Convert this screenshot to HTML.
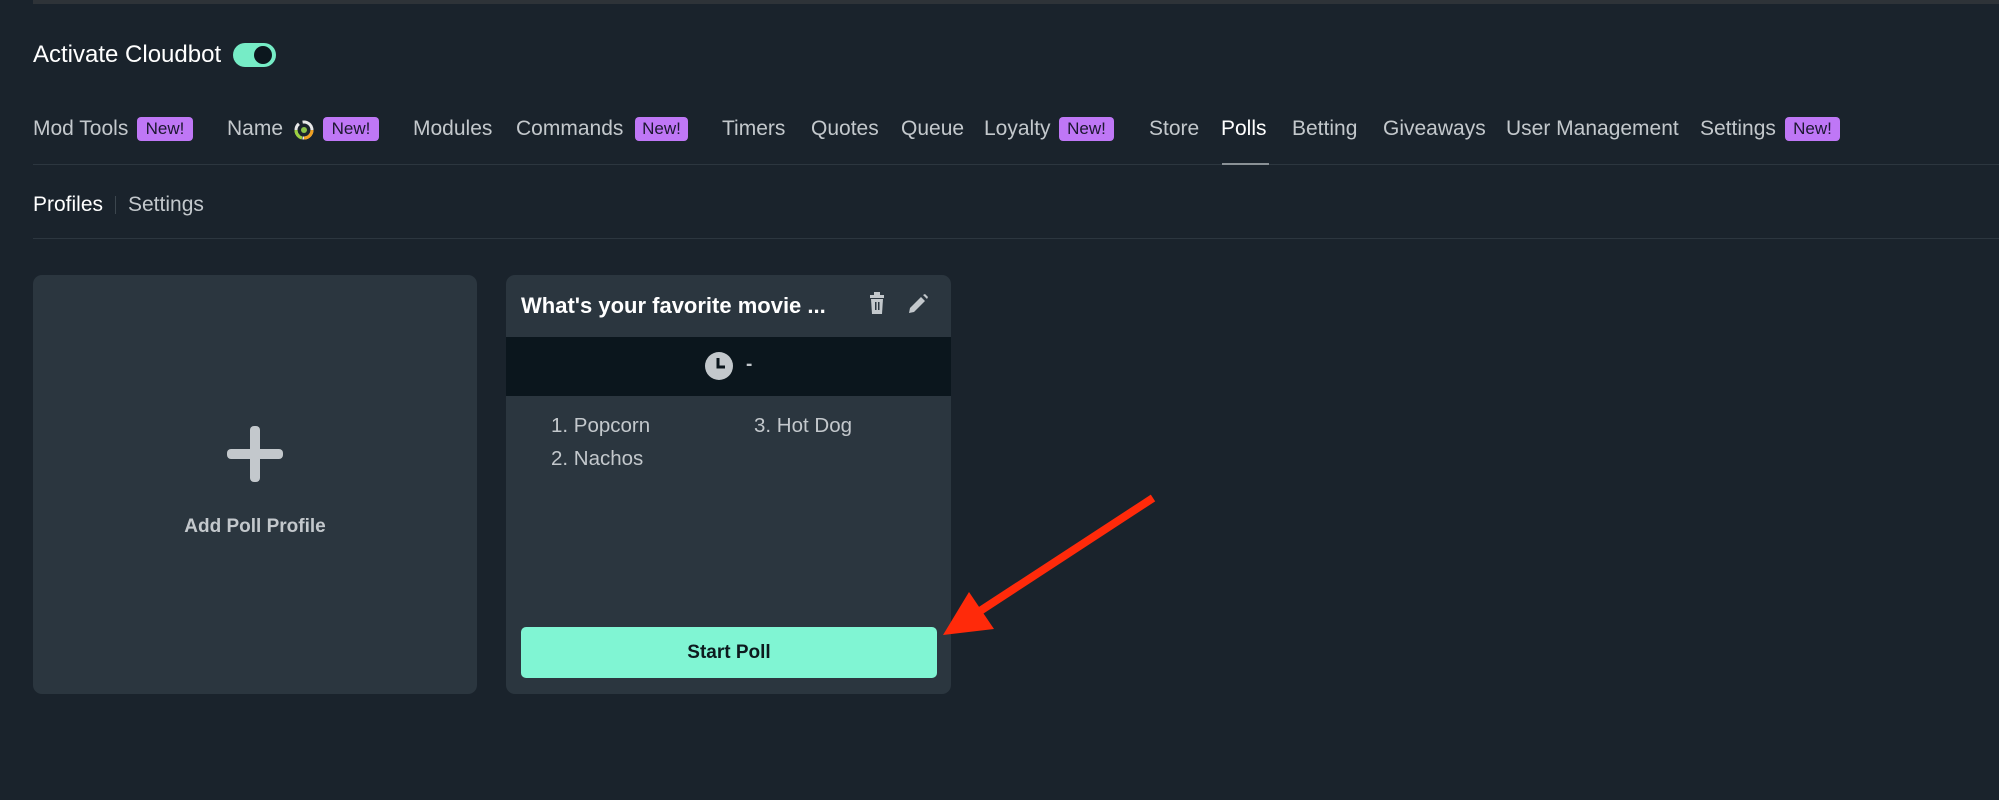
<!DOCTYPE html>
<html><head><meta charset="utf-8"><style>
*{margin:0;padding:0;box-sizing:border-box}
body{width:1999px;height:800px;background:#1a232c;font-family:"Liberation Sans",sans-serif;color:#c3c8cc;position:relative;overflow:hidden}
.a{position:absolute;white-space:nowrap}
.topbar{left:33px;top:0;width:1966px;height:4px;background:#2e3338}
.nav{top:116px;font-size:21px;color:#c3c8cc;line-height:26px}
.badge{position:absolute;top:117px;height:24px;background:#bf77f6;color:#1c1830;font-size:17px;line-height:24px;border-radius:4px;text-align:center}
.line{height:1px;background:#2c363f;left:33px;width:1966px}
.card{background:#2b363f;border-radius:9px}
</style></head><body>
<div class="a topbar"></div>
<div class="a" style="left:33px;top:41px;font-size:24px;color:#fff;line-height:28px">Activate Cloudbot</div>
<div class="a" style="left:233px;top:43px;width:43px;height:24px;border-radius:12px;background:#76ecc6"></div>
<div class="a" style="left:254px;top:46px;width:18px;height:18px;border-radius:9px;background:#0c171e"></div>

<div class="a nav" style="left:33px">Mod Tools</div>
<div class="badge" style="left:137px;width:56px">New!</div>
<div class="a nav" style="left:227px">Name</div>
<svg class="a" style="left:293px;top:119px" width="22" height="22" viewBox="0 0 22 22"><circle cx="11" cy="11" r="8" fill="none" stroke="#e8e8e8" stroke-width="3" stroke-dasharray="14 4"/><path d="M11 19A8 8 0 0 0 19 11" fill="none" stroke="#f0a020" stroke-width="3"/><path d="M3 11A8 8 0 0 0 9 19" fill="none" stroke="#9bd040" stroke-width="3"/><circle cx="11" cy="11" r="3" fill="#8bc34a"/></svg>
<div class="badge" style="left:323px;width:56px">New!</div>
<div class="a nav" style="left:413px">Modules</div>
<div class="a nav" style="left:516px">Commands</div>
<div class="badge" style="left:635px;width:53px">New!</div>
<div class="a nav" style="left:722px">Timers</div>
<div class="a nav" style="left:811px">Quotes</div>
<div class="a nav" style="left:901px">Queue</div>
<div class="a nav" style="left:984px">Loyalty</div>
<div class="badge" style="left:1059px;width:55px">New!</div>
<div class="a nav" style="left:1149px">Store</div>
<div class="a nav" style="left:1221px;color:#fff">Polls</div>
<div class="a nav" style="left:1292px">Betting</div>
<div class="a nav" style="left:1383px">Giveaways</div>
<div class="a nav" style="left:1506px">User Management</div>
<div class="a nav" style="left:1700px">Settings</div>
<div class="badge" style="left:1785px;width:55px">New!</div>
<div class="a line" style="top:164px"></div>
<div class="a" style="left:1222px;top:163px;width:47px;height:2px;background:#8a9196"></div>

<div class="a" style="left:33px;top:192px;font-size:21px;color:#fff;line-height:26px">Profiles</div>
<div class="a" style="left:115px;top:196px;width:1px;height:18px;background:#3c464e"></div>
<div class="a" style="left:128px;top:192px;font-size:21px;line-height:26px">Settings</div>
<div class="a line" style="top:238px"></div>

<div class="a card" style="left:33px;top:275px;width:444px;height:419px"></div>
<div class="a" style="left:227px;top:449px;width:56px;height:10px;border-radius:4px;background:#c3c8cc"></div>
<div class="a" style="left:250px;top:426px;width:10px;height:56px;border-radius:4px;background:#c3c8cc"></div>
<div class="a" style="left:33px;top:515px;width:444px;text-align:center;font-size:19px;line-height:24px;font-weight:bold;color:#c3c8cc">Add Poll Profile</div>

<div class="a card" style="left:506px;top:275px;width:445px;height:419px;overflow:hidden">
<div style="position:absolute;left:0;top:62px;width:445px;height:59px;background:#0b161d"></div>
</div>
<div class="a" style="left:521px;top:293px;font-size:22px;font-weight:bold;color:#fff;line-height:26px">What's your favorite movie ...</div>
<svg class="a" style="left:867px;top:292px" width="20" height="24" viewBox="0 0 20 24"><rect x="3" y="3" width="14" height="3" fill="#c3c8cc"/><rect x="7" y="0" width="6" height="4" fill="#c3c8cc"/><path d="M4 7h12l-1 15H5z" fill="#c3c8cc"/><rect x="8" y="10" width="1.5" height="8" fill="#2b363f"/><rect x="11" y="10" width="1.5" height="8" fill="#2b363f"/></svg>
<svg class="a" style="left:906px;top:292px" width="24" height="24" viewBox="0 0 24 24"><path d="M3 21l1-5L15 5l4 4L8 20z" fill="#c3c8cc"/><path d="M17 3l2-1 3 3-1 2z" fill="#c3c8cc"/></svg>
<svg class="a" style="left:704px;top:351px" width="30" height="30" viewBox="0 0 30 30"><circle cx="15" cy="15" r="14" fill="#c3c8cc"/><path d="M14 7v9h7" fill="none" stroke="#0b161d" stroke-width="3"/></svg>
<div class="a" style="left:746px;top:354px;font-size:19px;font-weight:bold;color:#c3c8cc">-</div>
<div class="a" style="left:551px;top:414px;font-size:20.5px;line-height:24px">1. Popcorn</div>
<div class="a" style="left:754px;top:414px;font-size:20.5px;line-height:24px">3. Hot Dog</div>
<div class="a" style="left:551px;top:447px;font-size:20.5px;line-height:24px">2. Nachos</div>
<div class="a" style="left:521px;top:627px;width:416px;height:51px;border-radius:5px;background:#80f5d3;color:#0d1a1e;font-weight:bold;font-size:19px;line-height:51px;text-align:center">Start Poll</div>

<svg class="a" style="left:0;top:0" width="1999" height="800"><line x1="1153" y1="498" x2="980" y2="611" stroke="#ff2a0a" stroke-width="8"/><polygon points="943,635 969,592 994,629" fill="#ff2a0a"/></svg>
</body></html>
